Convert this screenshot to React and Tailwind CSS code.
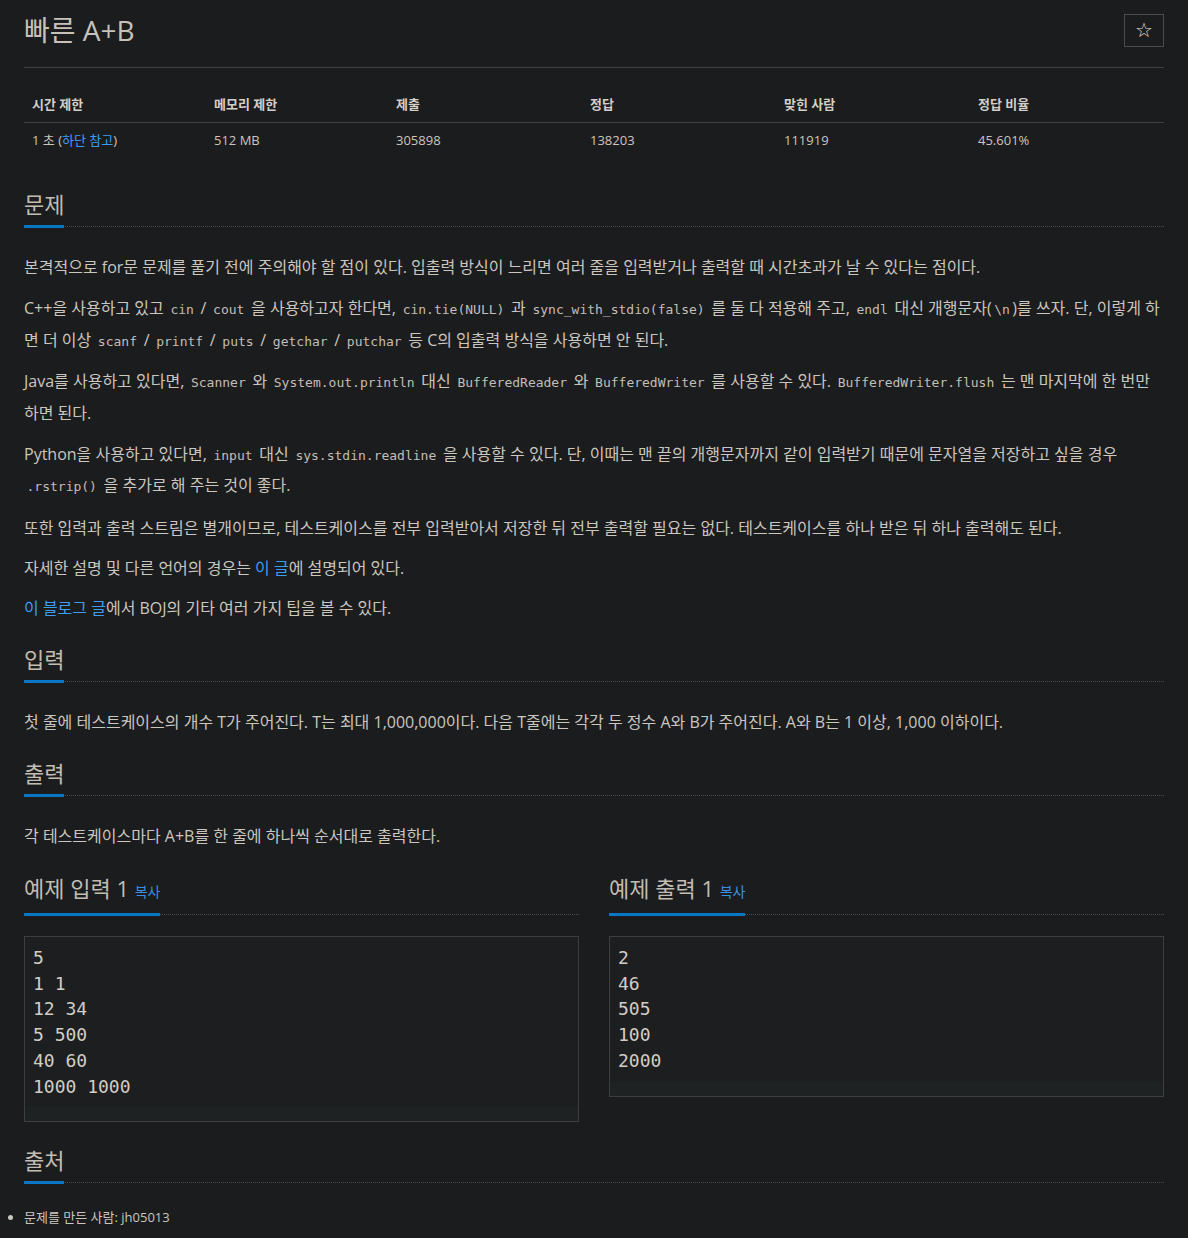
const C = ({ children }) => (
  <code className="whitespace-nowrap px-[2.5px] font-['DejaVu_Sans_Mono',monospace] text-[13px] leading-none text-[#c3beb6]">{children}</code>
);

const A = ({ children }) => <a className="text-[#3d9df5]">{children}</a>;

const Heading = ({ children }) => (
  <div className="flex items-end border-b border-dotted border-[#4a4d51]">
    <h2 className="-mb-[2px] border-b-[3px] border-[#0b76c5] pb-[7px] text-[22px] leading-[28px] text-[#c2bcb2]">
      {children}
    </h2>
  </div>
);

const Sample = ({ title, lines }) => (
  <div>
    <Heading>
      {title} <span className="text-[14px] text-[#3a8fe0]">복사</span>
    </Heading>
    <div className="mt-[21px] border border-[#3c3f42] bg-[#1d1e20]">
      <pre className="px-[8px] pt-[8px] pb-[8px] font-['DejaVu_Sans_Mono',monospace] text-[18px] leading-[25.7px] text-[#d2cdc5]">
        {lines.join('\n')}
      </pre>
      <div className="h-[14px] bg-[#1f2223]" />
    </div>
  </div>
);

const stats = [
  ['시간 제한', <>1 초 (<A>하단 참고</A>)</>],
  ['메모리 제한', '512 MB'],
  ['제출', '305898'],
  ['정답', '138203'],
  ['맞힌 사람', '111919'],
  ['정답 비율', '45.601%'],
];

export default function App() {
  return (
    <div className="min-h-screen w-full bg-[#1b1c1e] px-6 pb-[11px] font-['Open_Sans','Noto_Sans_CJK_KR',sans-serif] text-[16px] text-[#cbc6be]">
      <div className="flex items-center justify-between border-b border-[#3d4043] pt-[10px] pb-[17px]">
        <h1 className="text-[28px] leading-[40px] text-[#c6c1b9]">빠른 A+B</h1>
        <button className="flex h-[33px] w-[40px] items-center justify-center border border-[#4a4d50] font-['DejaVu_Sans',sans-serif] text-[20px] leading-none text-[#e0dbd3]">
          ☆
        </button>
      </div>

      <div className="mt-[20px] grid grid-cols-[182px_182px_194px_194px_194px_1fr] text-[13px]">
        {stats.map(([h]) => (
          <div key={h} className="flex h-[35px] items-center border-b border-[#3d4043] px-2 font-bold text-[#d4cfc7]">
            {h}
          </div>
        ))}
        {stats.map(([h, v]) => (
          <div key={h + 'v'} className="flex h-[36px] items-center px-2 text-[#cbc6be]">
            {v}
          </div>
        ))}
      </div>

      <section className="mt-[31px]">
        <Heading>문제</Heading>
        <div className="mt-[25px] break-all">
          <p className="mb-[10px] leading-[30px]">
            본격적으로 for문 문제를 풀기 전에 주의해야 할 점이 있다. 입출력 방식이 느리면 여러 줄을 입력받거나 출력할 때 시간초과가 날 수 있다는 점이다.
          </p>
          <p className="mb-[10px] leading-[32px]">
            C++을 사용하고 있고 <C>cin</C> / <C>cout</C> 을 사용하고자 한다면, <C>cin.tie(NULL)</C> 과 <C>sync_with_stdio(false)</C> 를 둘 다 적용해 주고, <C>endl</C> 대신 개행문자(<C>\n</C>)를 쓰자. 단, 이렇게 하면 더 이상 <C>scanf</C> / <C>printf</C> / <C>puts</C> / <C>getchar</C> / <C>putchar</C> 등 C의 입출력 방식을 사용하면 안 된다.
          </p>
          <p className="mb-[10px] leading-[31.5px]">
            Java를 사용하고 있다면, <C>Scanner</C> 와 <C>System.out.println</C> 대신 <C>BufferedReader</C> 와 <C>BufferedWriter</C> 를 사용할 수 있다. <C>BufferedWriter.flush</C> 는 맨 마지막에 한 번만 하면 된다.
          </p>
          <p className="mb-[12px] leading-[31px]">
            Python을 사용하고 있다면, <C>input</C> 대신 <C>sys.stdin.readline</C> 을 사용할 수 있다. 단, 이때는 맨 끝의 개행문자까지 같이 입력받기 때문에 문자열을 저장하고 싶을 경우 <C>.rstrip()</C> 을 추가로 해 주는 것이 좋다.
          </p>
          <p className="mb-[10px] leading-[30px]">
            또한 입력과 출력 스트림은 별개이므로, 테스트케이스를 전부 입력받아서 저장한 뒤 전부 출력할 필요는 없다. 테스트케이스를 하나 받은 뒤 하나 출력해도 된다.
          </p>
          <p className="mb-[10px] leading-[30px]">
            자세한 설명 및 다른 언어의 경우는 <A>이 글</A>에 설명되어 있다.
          </p>
          <p className="leading-[30px]">
            <A>이 블로그 글</A>에서 BOJ의 기타 여러 가지 팁을 볼 수 있다.
          </p>
        </div>
      </section>

      <section className="mt-[22px]">
        <Heading>입력</Heading>
        <p className="mt-[25px] leading-[30px]">
          첫 줄에 테스트케이스의 개수 T가 주어진다. T는 최대 1,000,000이다. 다음 T줄에는 각각 두 정수 A와 B가 주어진다. A와 B는 1 이상, 1,000 이하이다.
        </p>
      </section>

      <section className="mt-[22px]">
        <Heading>출력</Heading>
        <p className="mt-[25px] leading-[30px]">각 테스트케이스마다 A+B를 한 줄에 하나씩 순서대로 출력한다.</p>
      </section>

      <div className="mt-[23px] grid grid-cols-2 items-start gap-[30px]">
        <Sample title="예제 입력 1" lines={['5', '1 1', '12 34', '5 500', '40 60', '1000 1000']} />
        <Sample title="예제 출력 1" lines={['2', '46', '505', '100', '2000']} />
      </div>

      <section className="mt-[24px]">
        <Heading>출처</Heading>
        <ul className="mt-[24px] list-disc text-[13px] leading-[20px]">
          <li>문제를 만든 사람: jh05013</li>
        </ul>
      </section>
    </div>
  );
}
